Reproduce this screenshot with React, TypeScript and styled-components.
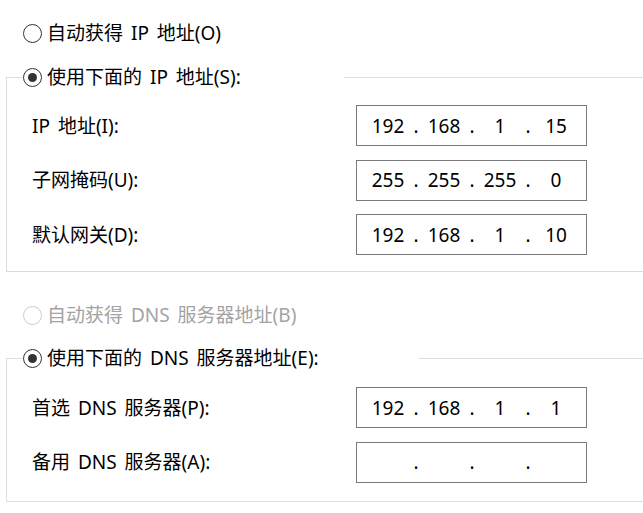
import React from "react";
import styled, { createGlobalStyle } from "styled-components";

const GlobalStyle = createGlobalStyle`
  html, body {
    margin: 0;
    padding: 0;
    background: #ffffff;
  }
  body {
    font-family: "Noto Sans", "Noto Sans CJK SC", sans-serif;
    font-size: 19px;
    color: #000000;
  }
`;

const Page = styled.div`
  display: flex;
  flex-direction: column;
  padding: 23px 0 0 6px;
  width: 637px;
  overflow: hidden;
`;

const RadioRow = styled.label<{ $disabled?: boolean; $indent?: number; $mt?: number; $mb?: number }>`
  display: flex;
  align-items: center;
  gap: 5px;
  height: 20px;
  line-height: 20px;
  white-space: nowrap;
  word-spacing: 3px;
  margin-left: ${(p) => p.$indent ?? 0}px;
  margin-top: ${(p) => p.$mt ?? 0}px;
  margin-bottom: ${(p) => p.$mb ?? 0}px;
  color: ${(p) => (p.$disabled ? "#a3a3a3" : "#000000")};
`;

const RadioInput = styled.input.attrs({ type: "radio" })`
  appearance: none;
  -webkit-appearance: none;
  margin: 0;
  flex: none;
  width: 19px;
  height: 19px;
  border-radius: 50%;
  box-sizing: border-box;
  border: 1.5px solid #333333;
  background: #ffffff;
  display: grid;
  place-items: center;

  &::after {
    content: "";
    width: 9px;
    height: 9px;
    border-radius: 50%;
    background: transparent;
  }
  &:checked::after {
    background: #333333;
  }
  &:disabled {
    border-color: #cccccc;
  }
`;

const Group = styled.fieldset`
  margin: 0;
  padding: 0;
  border: 1px solid #dcdcdc;
  border-right: none;
  min-width: 0;
`;

const Legend = styled.legend<{ $width: number }>`
  padding: 0;
  margin-left: 16px;
  width: ${(p) => p.$width}px;
  box-sizing: border-box;
`;

const Fields = styled.div<{ $pt: number; $pb: number }>`
  display: flex;
  flex-direction: column;
  gap: 13.5px;
  padding: ${(p) => p.$pt}px 0 ${(p) => p.$pb}px 25px;
`;

const FieldRow = styled.div`
  display: grid;
  grid-template-columns: 324px 231px;
  align-items: center;
`;

const FieldLabel = styled.span`
  white-space: nowrap;
  word-spacing: 3px;
  line-height: 22px;
`;

const IpBox = styled.div`
  display: flex;
  align-items: center;
  box-sizing: border-box;
  width: 231px;
  height: 41px;
  border: 1px solid #7a7a7a;
  padding-left: 8px;
  background: #ffffff;
  font-family: "Noto Sans", sans-serif;
  font-size: 19px;
  color: #000000;
`;

const Octet = styled.span`
  width: 46px;
  text-align: center;
  line-height: 22px;
`;

const Dot = styled.span`
  width: 10px;
  text-align: center;
  line-height: 22px;
`;

function IpField({ value }: { value: string[] }) {
  return (
    <IpBox>
      {value.map((v, i) => (
        <React.Fragment key={i}>
          {i > 0 && <Dot>.</Dot>}
          <Octet>{v}</Octet>
        </React.Fragment>
      ))}
    </IpBox>
  );
}

export default function App() {
  return (
    <>
      <GlobalStyle />
      <Page>
        <RadioRow $indent={17} $mb={24}>
          <RadioInput name="ip" />
          <span>自动获得 IP 地址(O)</span>
        </RadioRow>

        <Group>
          <Legend $width={321}>
            <RadioRow>
              <RadioInput name="ip" defaultChecked />
              <span>使用下面的 IP 地址(S):</span>
            </RadioRow>
          </Legend>
          <Fields $pt={18} $pb={16}>
            <FieldRow>
              <FieldLabel>IP 地址(I):</FieldLabel>
              <IpField value={["192", "168", "1", "15"]} />
            </FieldRow>
            <FieldRow>
              <FieldLabel>子网掩码(U):</FieldLabel>
              <IpField value={["255", "255", "255", "0"]} />
            </FieldRow>
            <FieldRow>
              <FieldLabel>默认网关(D):</FieldLabel>
              <IpField value={["192", "168", "1", "10"]} />
            </FieldRow>
          </Fields>
        </Group>

        <RadioRow $indent={17} $mt={33} $mb={23} $disabled>
          <RadioInput name="dns" disabled />
          <span>自动获得 DNS 服务器地址(B)</span>
        </RadioRow>

        <Group>
          <Legend $width={396}>
            <RadioRow>
              <RadioInput name="dns" defaultChecked />
              <span>使用下面的 DNS 服务器地址(E):</span>
            </RadioRow>
          </Legend>
          <Fields $pt={19} $pb={18}>
            <FieldRow>
              <FieldLabel>首选 DNS 服务器(P):</FieldLabel>
              <IpField value={["192", "168", "1", "1"]} />
            </FieldRow>
            <FieldRow>
              <FieldLabel>备用 DNS 服务器(A):</FieldLabel>
              <IpField value={["", "", "", ""]} />
            </FieldRow>
          </Fields>
        </Group>
      </Page>
    </>
  );
}
